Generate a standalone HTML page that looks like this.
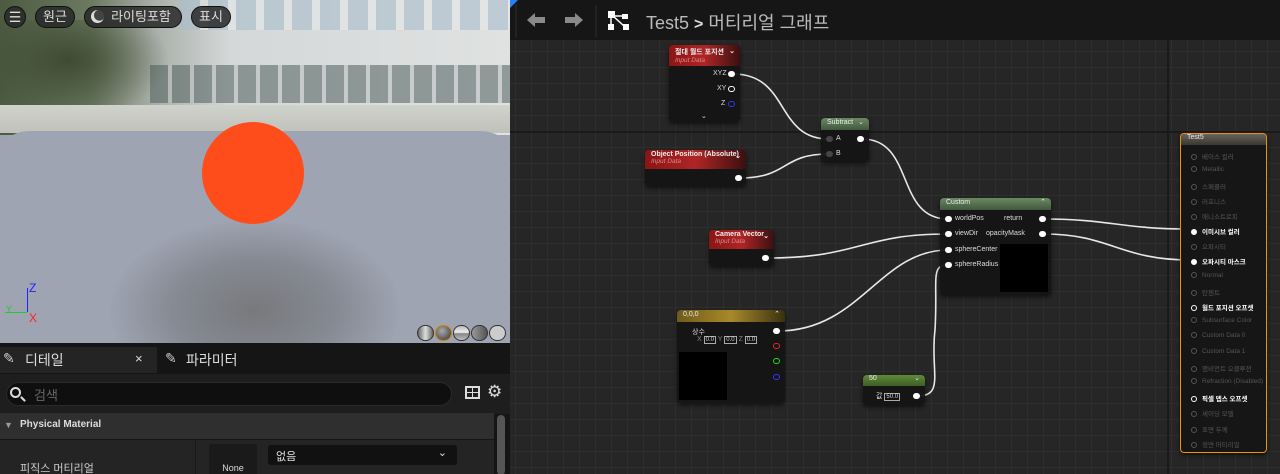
<!DOCTYPE html>
<html style="overflow:hidden;width:1280px;height:474px"><head><meta charset="utf-8"><style>
*{box-sizing:border-box;margin:0;padding:0}
body{width:1280px;height:474px;overflow:hidden;background:#151515;font-family:"Liberation Sans","Noto Sans CJK KR",sans-serif;position:relative;color:#ddd}
.a{position:absolute}
.node{position:absolute;background:rgba(20,20,20,.95);border-radius:4px;box-shadow:0 2px 4px rgba(0,0,0,.6);font-size:7px;color:#ddd}
.hd{border-radius:4px 4px 0 0;padding:2px 6px;font-size:7px;font-weight:bold;color:#eee;position:relative}
.red{background:linear-gradient(90deg,#8a1515,#b02525 50%,#3a1010)}
.green{background:linear-gradient(180deg,#6a8a62,#42583e)}
.sub{font-style:italic;font-weight:normal;color:#d88;font-size:6.5px}
.pin{position:absolute;width:7px;height:6px;border-radius:3px;background:#fff}
.lbl{position:absolute;font-size:7px;color:#ddd;white-space:nowrap}
.chev{position:absolute;right:5px;top:2px;font-size:7px;color:#eee}
.pill{position:absolute;top:6px;height:22px;border-radius:11px;background:rgba(40,40,40,.85);border:1px solid #111;color:#ddd;font-size:13px;line-height:20px;text-align:center}
.tr{position:absolute;left:10px;font-size:6.5px;color:#555;white-space:nowrap}
.tr i{display:inline-block;width:6px;height:6px;border:1px solid #555;border-radius:3px;margin-right:5px;vertical-align:-1px}
.tr.on{color:#fff;font-weight:bold}.tr.on i{border-color:#fff}
.fld{display:inline-block;border:1px solid #aaa;padding:0 1px;font-size:6px;color:#ddd;background:#111}
</style></head><body>
<!-- viewport -->
<div class="a" style="left:0;top:0;width:510px;height:343px;overflow:hidden;background:#9ea3b1">
 <div class="a" style="left:0;top:0;width:510px;height:135px;background:linear-gradient(90deg,#4b5a40 0%,#6c7a62 18%,#a8aea8 30%,#d4d8d8 45%,#e0e2e2 100%)"></div>
 <div class="a" style="left:180px;top:0;width:330px;height:30px;background:repeating-linear-gradient(90deg,#a8bccb 0 20px,#e6e8e8 20px 28px);opacity:.6"></div>
 <div class="a" style="left:150px;top:65px;width:360px;height:38px;background:repeating-linear-gradient(90deg,#4e5e5c 0 18px,#b8bcbc 18px 22px);opacity:.55"></div>
 <div class="a" style="left:0;top:20px;width:170px;height:100px;background:radial-gradient(ellipse at 40% 40%,#3f4c33,rgba(80,90,70,0) 70%)"></div>
 <div class="a" style="left:0;top:105px;width:510px;height:28px;background:linear-gradient(#d0d2cc,#bfc1ba)"></div>
 <div class="a" style="left:-10px;top:131px;width:530px;height:230px;border-radius:40px 40px 0 0;background:#9ea4b2"></div>
 <div class="a" style="left:110px;top:220px;width:290px;height:180px;border-radius:50%;background:radial-gradient(ellipse,#78797c 0%,#868a93 40%,rgba(158,164,178,0) 72%)"></div>
 <div class="a" style="left:202px;top:122px;width:102px;height:102px;border-radius:50%;background:#fe4d1b"></div>
 <div class="pill" style="left:4px;width:22px;font-size:14px">☰</div>
 <div class="pill" style="left:35px;width:40px">원근</div>
 <div class="pill" style="left:84px;width:98px;padding-left:16px"><span class="a" style="left:6px;top:3px;width:13px;height:13px;border-radius:50%;background:radial-gradient(circle at 65% 40%,#444 45%,#ddd 50%)"></span>라이팅포함</div>
 <div class="pill" style="left:191px;width:40px">표시</div>
 <div class="a" style="left:27px;top:288px;width:1px;height:24px;background:#22f"></div>
 <div class="a" style="left:5px;top:312px;width:22px;height:1px;background:#2c2"></div>
 <div class="a" style="left:29px;top:281px;font-size:12px;color:#22f">Z</div>
 <div class="a" style="left:29px;top:311px;font-size:12px;color:#f22">X</div>
 <div class="a" style="left:6px;top:304px;font-size:9px;color:#2c2">Y</div>
 <div class="a" style="left:417px;top:325px;width:92px;height:16px;display:flex;gap:1px">
  <span style="width:17px;height:16px;border-radius:8px;background:linear-gradient(90deg,#666,#ddd,#666);border:1px solid #333"></span>
  <span style="width:17px;height:16px;border-radius:8px;background:radial-gradient(circle at 40% 35%,#aaa,#333);border:1px solid #c80"></span>
  <span style="width:17px;height:16px;border-radius:8px;background:linear-gradient(#bbb,#eee 45%,#888 55%,#bbb);border:1px solid #333"></span>
  <span style="width:17px;height:16px;border-radius:8px;background:linear-gradient(90deg,#999,#555);border:1px solid #333"></span>
  <span style="width:17px;height:16px;border-radius:8px;background:#ccc;border:1px solid #333"></span>
 </div>
</div>
<!-- details panel -->
<div class="a" style="left:0;top:343px;width:510px;height:131px;background:#151515;overflow:hidden">
 <div class="a" style="left:0;top:4px;width:157px;height:26px;background:#242424"></div>
 <div class="a" style="left:3px;top:7px;font-size:14px;color:#ccc">✎</div>
 <div class="a" style="left:25px;top:7px;font-size:14px;color:#ddd">디테일</div>
 <div class="a" style="left:135px;top:8px;font-size:13px;color:#ddd">×</div>
 <div class="a" style="left:165px;top:7px;font-size:14px;color:#ccc">✎</div>
 <div class="a" style="left:186px;top:7px;font-size:14px;color:#ddd">파라미터</div>
 <div class="a" style="left:0;top:31px;width:510px;height:40px;background:#1e1e1e"></div>
 <div class="a" style="left:6px;top:39px;width:446px;height:24px;border-radius:12px;background:#0f0f0f;border:1px solid #2a2a2a"></div>
 <div class="a" style="left:10px;top:44px;width:11px;height:11px;border:2px solid #ddd;border-radius:50%"></div>
 <div class="a" style="left:20px;top:55px;width:6px;height:2px;background:#ddd;transform:rotate(45deg)"></div>
 <div class="a" style="left:34px;top:42px;font-size:13px;color:#666">검색</div>
 <div class="a" style="left:465px;top:43px;width:15px;height:13px;border:2px solid #ddd;background:linear-gradient(#ddd,#ddd) 0 4px/100% 1px no-repeat,linear-gradient(90deg,#ddd,#ddd) 5px 0/1px 100% no-repeat"></div>
 <div class="a" style="left:487px;top:39px;font-size:17px;color:#ddd">⚙</div>
 <div class="a" style="left:0;top:70px;width:494px;height:26px;background:#2f2f2f"></div>
 <div class="a" style="left:4px;top:77px;font-size:9px;color:#999">▼</div>
 <div class="a" style="left:20px;top:76px;font-size:10px;font-weight:bold;color:#ddd">Physical Material</div>
 <div class="a" style="left:0;top:97px;width:494px;height:34px;background:#242424"></div>
 <div class="a" style="left:195px;top:97px;width:1px;height:34px;background:#1a1a1a"></div>
 <div class="a" style="left:20px;top:117px;font-size:11px;color:#ccc">피직스 머티리얼</div>
 <div class="a" style="left:209px;top:101px;width:48px;height:40px;background:#1a1a1a;border-radius:3px;font-size:9px;color:#ddd;text-align:center;padding-top:19px">None</div>
 <div class="a" style="left:268px;top:102px;width:189px;height:20px;background:#111;border-radius:3px;font-size:11px;color:#ddd;padding:3px 8px">없음<span style="position:absolute;right:10px;top:1px">⌄</span></div>
 <div class="a" style="left:497px;top:72px;width:8px;height:60px;border-radius:4px;background:#555"></div>
</div>
<!-- graph -->
<div class="a" style="left:510px;top:0;width:770px;height:474px;overflow:hidden;background-color:#262626;background-image:linear-gradient(#1a1a1a,#1a1a1a),linear-gradient(90deg,#1a1a1a,#1a1a1a),linear-gradient(#2e2e2e 1px,transparent 1px),linear-gradient(90deg,#2e2e2e 1px,transparent 1px);background-size:100% 2px,2px 100%,16px 16px,16px 16px;background-position:0 131px,657px 0,0 3px,5px 0;background-repeat:no-repeat,no-repeat,repeat,repeat">
 <div class="a" style="left:0;top:0;width:770px;height:40px;background:#161616"></div>
 <div class="a" style="left:0;top:0;width:0;height:0;border-top:8px solid #2a7fff;border-right:8px solid transparent"></div>
 <div class="a" style="left:5px;top:4px;width:2px;height:34px;background:#222"></div>
 <svg class="a" style="left:15px;top:11px" width="70" height="20" fill="#8a8a8a"><path d="M2 9 L10 2 L10 6 L20 6 L20 12 L10 12 L10 16 Z"/><path d="M58 9 L50 2 L50 6 L40 6 L40 12 L50 12 L50 16 Z"/></svg>
 <div class="a" style="left:85px;top:5px;width:2px;height:32px;background:#222"></div>
 <svg class="a" style="left:98px;top:11px" width="22" height="20"><rect x="0" y="0" width="7" height="7" fill="#fff"/><rect x="14" y="3" width="6" height="5" fill="#fff"/><rect x="0" y="13" width="6" height="6" fill="#fff"/><rect x="15" y="13" width="6" height="6" fill="#fff"/><path d="M5 5 L16 15 M5 5 L16 5 M3 6 L3 14" stroke="#fff" stroke-width="1.5"/></svg>
 <div class="a" style="left:136px;top:9px;font-size:18px;color:#bbb">Test5 <b style="font-size:16px;color:#ddd">&gt;</b> 머티리얼 그래프</div>
</div>
<svg class="a" style="left:0;top:0" width="1280" height="474" fill="none" stroke="#e8e8e8" stroke-width="1.6">
 <path d="M733 74 C790 74,775 139,829 139"/>
 <path d="M739 178 C790 178,780 154,829 154"/>
 <path d="M862 139 C915 139,895 219,948 219"/>
 <path d="M767 258 C860 258,860 234,948 234"/>
 <path d="M778 331 C860 331,880 250,948 250"/>
 <path d="M918 396 C945 396,930 370,935 330 C938 280,930 265,948 265"/>
 <path d="M1044 219 C1110 219,1120 229,1190 229"/>
 <path d="M1044 234 C1110 234,1120 260,1190 260"/>
</svg>
<!-- nodes -->
<div class="node" style="left:669px;top:45px;width:71px;height:77px">
 <div class="hd red" style="height:21px;padding-top:2px">절대 월드 포지션<div class="sub">Input Data</div><span class="chev">⌄</span></div>
 <div class="lbl" style="left:44px;top:25px">XYZ</div><div class="pin" style="left:59px;top:26px"></div>
 <div class="lbl" style="left:48px;top:40px">XY</div><div class="pin" style="left:59px;top:41px;background:none;border:1px solid #fff"></div>
 <div class="lbl" style="left:52px;top:55px">Z</div><div class="pin" style="left:59px;top:56px;background:none;border:1px solid #33f"></div>
 <div class="lbl" style="left:32px;top:67px">⌄</div>
</div>
<div class="node" style="left:821px;top:118px;width:48px;height:44px">
 <div class="hd green" style="height:12px;padding-top:1px;font-weight:normal">Subtract<span class="chev" style="top:0">⌄</span></div>
 <div class="pin" style="left:5px;top:18px;background:#444"></div><div class="lbl" style="left:15px;top:17px">A</div>
 <div class="pin" style="left:5px;top:33px;background:#444"></div><div class="lbl" style="left:15px;top:32px">B</div>
 <div class="pin" style="left:36px;top:18px"></div>
</div>
<div class="node" style="left:645px;top:150px;width:101px;height:36px">
 <div class="hd red" style="height:19px;padding-top:1px">Object Position (Absolute)<div class="sub">Input Data</div><span class="chev">⌄</span></div>
 <div class="pin" style="left:90px;top:25px"></div>
</div>
<div class="node" style="left:709px;top:230px;width:65px;height:36px">
 <div class="hd red" style="height:19px;padding-top:1px">Camera Vector<div class="sub">Input Data</div><span class="chev">⌄</span></div>
 <div class="pin" style="left:53px;top:25px"></div>
</div>
<div class="node" style="left:940px;top:198px;width:111px;height:97px">
 <div class="hd green" style="height:12px;padding-top:1px;font-weight:normal">Custom<span class="chev" style="top:0">⌃</span></div>
 <div class="pin" style="left:5px;top:18px"></div><div class="lbl" style="left:15px;top:17px">worldPos</div>
 <div class="pin" style="left:5px;top:33px"></div><div class="lbl" style="left:15px;top:32px">viewDir</div>
 <div class="pin" style="left:5px;top:49px"></div><div class="lbl" style="left:15px;top:48px">sphereCenter</div>
 <div class="pin" style="left:5px;top:64px"></div><div class="lbl" style="left:15px;top:63px">sphereRadius</div>
 <div class="lbl" style="left:64px;top:17px">return</div><div class="pin" style="left:99px;top:18px"></div>
 <div class="lbl" style="left:46px;top:32px">opacityMask</div><div class="pin" style="left:99px;top:33px"></div>
 <div class="a" style="left:60px;top:46px;width:48px;height:48px;background:#000"></div>
</div>
<div class="node" style="left:677px;top:310px;width:108px;height:93px">
 <div class="hd" style="height:12px;padding-top:1px;font-weight:normal;background:linear-gradient(90deg,#6e5a1a,#a8892a 50%,#3a3010)">0,0,0<span class="chev" style="top:0">⌃</span></div>
 <div class="lbl" style="left:15px;top:17px">상수</div><div class="pin" style="left:96px;top:18px"></div>
 <div class="lbl" style="left:20px;top:26px;color:#888">X <span class="fld">0.0</span> Y <span class="fld">0.0</span> Z <span class="fld">0.0</span></div>
 <div class="pin" style="left:96px;top:33px;background:none;border:1px solid #e22"></div>
 <div class="pin" style="left:96px;top:48px;background:none;border:1px solid #2d2"></div>
 <div class="pin" style="left:96px;top:64px;background:none;border:1px solid #33f"></div>
 <div class="a" style="left:2px;top:42px;width:48px;height:48px;background:#000"></div>
</div>
<div class="node" style="left:863px;top:375px;width:62px;height:30px">
 <div class="hd" style="height:11px;padding-top:0;font-weight:normal;background:linear-gradient(180deg,#5e8a3a,#3e5e24)">50<span class="chev" style="top:-1px">⌄</span></div>
 <div class="lbl" style="left:13px;top:16px">값 <span class="fld">50.0</span></div><div class="pin" style="left:50px;top:18px"></div>
</div>
<div class="node" style="left:1180px;top:133px;width:87px;height:320px;border:1.5px solid #e8920e;background:#161616">
 <div class="hd" style="height:11px;padding-top:0;font-weight:normal;background:linear-gradient(180deg,#6a645c,#3a3630);border-radius:3px 3px 0 0">Test5</div>
 <div class="tr" style="top:17px"><i></i>베이스 컬러</div>
 <div class="tr" style="top:32px"><i></i>Metallic</div>
 <div class="tr" style="top:47px"><i></i>스페큘러</div>
 <div class="tr" style="top:62px"><i></i>러프니스</div>
 <div class="tr" style="top:77px"><i></i>애니소트로피</div>
 <div class="tr on" style="top:92px"><i style="background:#fff"></i>이미시브 컬러</div>
 <div class="tr" style="top:107px"><i></i>오파시티</div>
 <div class="tr on" style="top:122px"><i style="background:#fff"></i>오파시티 마스크</div>
 <div class="tr" style="top:138px"><i></i>Normal</div>
 <div class="tr" style="top:153px"><i></i>탄젠트</div>
 <div class="tr on" style="top:168px"><i></i>월드 포지션 오프셋</div>
 <div class="tr" style="top:183px"><i></i>Subsurface Color</div>
 <div class="tr" style="top:198px"><i></i>Custom Data 0</div>
 <div class="tr" style="top:214px"><i></i>Custom Data 1</div>
 <div class="tr" style="top:229px"><i></i>앰비언트 오클루전</div>
 <div class="tr" style="top:244px"><i></i>Refraction (Disabled)</div>
 <div class="tr on" style="top:259px"><i></i>픽셀 뎁스 오프셋</div>
 <div class="tr" style="top:274px"><i></i>셰이딩 모델</div>
 <div class="tr" style="top:290px"><i></i>표면 두께</div>
 <div class="tr" style="top:305px"><i></i>정면 머티리얼</div>
</div>
</body></html>
